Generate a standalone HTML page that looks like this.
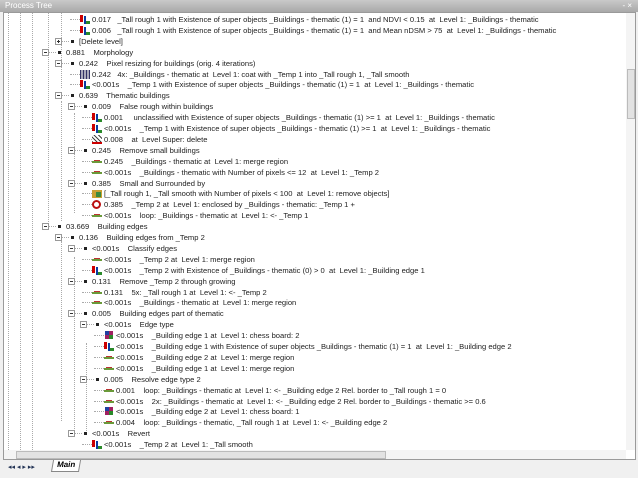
<!DOCTYPE html>
<html><head><meta charset="utf-8"><style>
html,body{margin:0;padding:0;width:638px;height:478px;overflow:hidden;background:#f0f0f0;font-family:"Liberation Sans",sans-serif;}
#title{position:absolute;left:0;top:0;width:638px;height:12px;background:linear-gradient(#c9c9c9,#a9a9a9);color:#fff;font-size:8px;line-height:12px;}
#title span{position:absolute;left:5px;}
#title b{position:absolute;right:6px;font-weight:normal;font-size:8px;}
#pane{position:absolute;left:3px;top:12px;width:633px;height:448px;background:#fff;border:1px solid #9a9a9a;box-sizing:border-box;overflow:hidden;}
.r{position:absolute;font-size:7.6px;line-height:11px;white-space:pre;color:#222;height:11px;}
.ex{position:absolute;width:7px;height:7px;border:1px solid #999;background:#fff;box-sizing:border-box;}
.ex:after{content:"";position:absolute;left:1px;top:2px;width:3px;height:1px;background:#333;}
.ex.p:before{content:"";position:absolute;left:2px;top:1px;width:1px;height:3px;background:#333;}
.bu{position:absolute;width:3px;height:3px;background:#222;}
.ic{position:absolute;width:10px;height:9px;}
.vl{position:absolute;width:0;border-left:1px dotted #aaa;}
.hl{position:absolute;height:0;border-top:1px dotted #aaa;}
#vs{position:absolute;left:622px;top:0;width:10px;height:437px;background:#f4f4f4;}
#vth{position:absolute;left:623px;top:56px;width:8px;height:50px;background:#e2e2e2;border:1px solid #bbb;box-sizing:border-box;}
#hs{position:absolute;left:0;top:437px;width:622px;height:10px;background:#f4f4f4;}
#hth{position:absolute;left:12px;top:438px;width:370px;height:8px;background:#e2e2e2;border:1px solid #bbb;box-sizing:border-box;}
#tabs{position:absolute;left:0;top:460px;width:638px;height:18px;font-size:8px;}
</style></head><body>
<div id="title"><span>Process Tree</span><b>- ×</b></div>
<div id="pane">
<div class="vl" style="left:4px;top:0;height:437px"></div>
<div class="vl" style="left:16px;top:0;height:437px"></div>
<div class="vl" style="left:28px;top:0;height:437px"></div>
<div class="vl" style="left:44px;top:0;height:215px"></div>
<div class="vl" style="left:57px;top:0;height:75px"></div>
<div class="vl" style="left:57px;top:88px;height:120px"></div>
<div class="vl" style="left:57px;top:228px;height:180px"></div>
<div class="vl" style="left:70px;top:100px;height:100px"></div>
<div class="vl" style="left:70px;top:244px;height:180px"></div>
<div class="vl" style="left:82px;top:330px;height:90px"></div>
<div id="rows"></div>
<div id="vs"></div><div id="vth"></div>
<div id="hs"></div><div id="hth"></div>
</div>
<div id="tabs">
<span style="position:absolute;left:8px;top:3px;color:#235;font-size:7px">◂◂ ◂ ▸ ▸▸</span>
<div style="position:absolute;left:52px;top:0;width:26px;height:11px;border:1px solid #888;border-top:none;background:#fff;font-weight:bold;font-size:8px;line-height:10px;text-align:center;transform:skewX(-10deg)">Main</div>
</div>
<script>
var R=[
["l",78,"mc","0.017   _Tall rough 1 with Existence of super objects _Buildings - thematic (1) = 1  and NDVI < 0.15  at  Level 1: _Buildings - thematic"],
["l",78,"mc","0.006   _Tall rough 1 with Existence of super objects _Buildings - thematic (1) = 1  and Mean nDSM > 75  at  Level 1: _Buildings - thematic"],
["n",54,"p","[Delete level]"],
["n",41,"m","0.881    Morphology"],
["n",54,"m","0.242    Pixel resizing for buildings (orig. 4 iterations)"],
["l",78,"gr","0.242   4x: _Buildings - thematic at  Level 1: coat with _Temp 1 into _Tall rough 1, _Tall smooth"],
["l",78,"mc","<0.001s    _Temp 1 with Existence of super objects _Buildings - thematic (1) = 1  at  Level 1: _Buildings - thematic"],
["n",54,"m","0.639    Thematic buildings"],
["n",67,"m","0.009    False rough within buildings"],
["l",90,"mc","0.001     unclassified with Existence of super objects _Buildings - thematic (1) >= 1  at  Level 1: _Buildings - thematic"],
["l",90,"mc","<0.001s    _Temp 1 with Existence of super objects _Buildings - thematic (1) >= 1  at  Level 1: _Buildings - thematic"],
["l",90,"dl","0.008    at  Level Super: delete"],
["n",67,"m","0.245    Remove small buildings"],
["l",90,"mg","0.245    _Buildings - thematic at  Level 1: merge region"],
["l",90,"mg","<0.001s    _Buildings - thematic with Number of pixels <= 12  at  Level 1: _Temp 2"],
["n",67,"m","0.385    Small and Surrounded by"],
["l",90,"yl","[_Tall rough 1, _Tall smooth with Number of pixels < 100  at  Level 1: remove objects]"],
["l",90,"rd","0.385    _Temp 2 at  Level 1: enclosed by _Buildings - thematic: _Temp 1 +"],
["l",90,"mg","<0.001s    loop: _Buildings - thematic at  Level 1: <- _Temp 1"],
["n",41,"m","03.669    Building edges"],
["n",54,"m","0.136    Building edges from _Temp 2"],
["n",67,"m","<0.001s    Classify edges"],
["l",90,"mg","<0.001s    _Temp 2 at  Level 1: merge region"],
["l",90,"mc","<0.001s    _Temp 2 with Existence of _Buildings - thematic (0) > 0  at  Level 1: _Building edge 1"],
["n",67,"m","0.131    Remove _Temp 2 through growing"],
["l",90,"mg","0.131    5x: _Tall rough 1 at  Level 1: <- _Temp 2"],
["l",90,"mg","<0.001s    _Buildings - thematic at  Level 1: merge region"],
["n",67,"m","0.005    Building edges part of thematic"],
["n",79,"m","<0.001s    Edge type"],
["l",102,"cb","<0.001s    _Building edge 1 at  Level 1: chess board: 2"],
["l",102,"mc","<0.001s    _Building edge 1 with Existence of super objects _Buildings - thematic (1) = 1  at  Level 1: _Building edge 2"],
["l",102,"mg","<0.001s    _Building edge 2 at  Level 1: merge region"],
["l",102,"mg","<0.001s    _Building edge 1 at  Level 1: merge region"],
["n",79,"m","0.005    Resolve edge type 2"],
["l",102,"mg","0.001    loop: _Buildings - thematic at  Level 1: <- _Building edge 2 Rel. border to _Tall rough 1 = 0"],
["l",102,"mg","<0.001s    2x: _Buildings - thematic at  Level 1: <- _Building edge 2 Rel. border to _Buildings - thematic >= 0.6"],
["l",102,"cb","<0.001s    _Building edge 2 at  Level 1: chess board: 1"],
["l",102,"mg","0.004    loop: _Buildings - thematic, _Tall rough 1 at  Level 1: <- _Building edge 2"],
["n",67,"m","<0.001s    Revert"],
["l",90,"mc","<0.001s    _Temp 2 at  Level 1: _Tall smooth"]
];
function icon(t){
 if(t=="mc")return '<div style="position:absolute;left:0;top:0;width:3px;height:7px;background:#c00"></div><div style="position:absolute;left:4px;top:1px;width:2px;height:8px;background:#0a3ca0"></div><div style="position:absolute;left:6px;top:6px;width:4px;height:3px;background:#2a8a2a"></div>';
 if(t=="mg")return '<div style="position:absolute;left:0;top:4px;width:10px;height:2px;background:#6a9a3a"></div><div style="position:absolute;left:2px;top:3px;width:6px;height:1px;background:#b33"></div>';
 if(t=="gr")return '<div style="position:absolute;left:0;top:0;width:10px;height:9px;background:repeating-linear-gradient(90deg,#336 0 1px,#aab 1px 3px)"></div>';
 if(t=="cb")return '<div style="position:absolute;left:1px;top:0;width:4px;height:4px;background:#2040a0"></div><div style="position:absolute;left:5px;top:0;width:4px;height:4px;background:#a02060"></div><div style="position:absolute;left:1px;top:4px;width:4px;height:4px;background:#a02060"></div><div style="position:absolute;left:5px;top:4px;width:4px;height:4px;background:#2a8a2a"></div>';
 if(t=="dl")return '<div style="position:absolute;left:0;top:0;width:10px;height:9px;background:repeating-linear-gradient(45deg,#444 0 1px,#fff 1px 3px);border-bottom:2px solid #c00;box-sizing:border-box"></div>';
 if(t=="yl")return '<div style="position:absolute;left:0;top:1px;width:10px;height:8px;background:#c9a030"></div><div style="position:absolute;left:4px;top:3px;width:5px;height:5px;background:#3a8a3a"></div>';
 if(t=="rd")return '<div style="position:absolute;left:0;top:0;width:9px;height:9px;border-radius:50%;border:2px solid #b11;box-sizing:border-box;background:#fff"></div>';
 return '';
}
var h='';
R.forEach(function(r,i){
 var top=Math.round(1+i*10.9);
 if(r[0]=="n"){
  var ex=r[1]-3;
  h+='<div class="hl" style="left:'+(ex+7)+'px;top:'+(top+5)+'px;width:7px"></div>';
  h+='<div class="ex'+(r[2]=="p"?" p":"")+'" style="left:'+ex+'px;top:'+(top+2)+'px"></div>';
  h+='<div class="bu" style="left:'+(ex+16)+'px;top:'+(top+4)+'px"></div>';
  h+='<div class="r" style="left:'+(ex+24)+'px;top:'+top+'px">'+r[3].replace(/</g,"&lt;")+'</div>';
 }else{
  var ix=r[1]-2;
  h+='<div class="hl" style="left:'+(ix-10)+'px;top:'+(top+5)+'px;width:10px"></div>';
  h+='<div class="ic" style="left:'+ix+'px;top:'+(top+1)+'px">'+icon(r[2])+'</div>';
  h+='<div class="r" style="left:'+(ix+12)+'px;top:'+top+'px">'+r[3].replace(/</g,"&lt;")+'</div>';
 }
});
document.getElementById('rows').innerHTML=h;
</script>
</body></html>
